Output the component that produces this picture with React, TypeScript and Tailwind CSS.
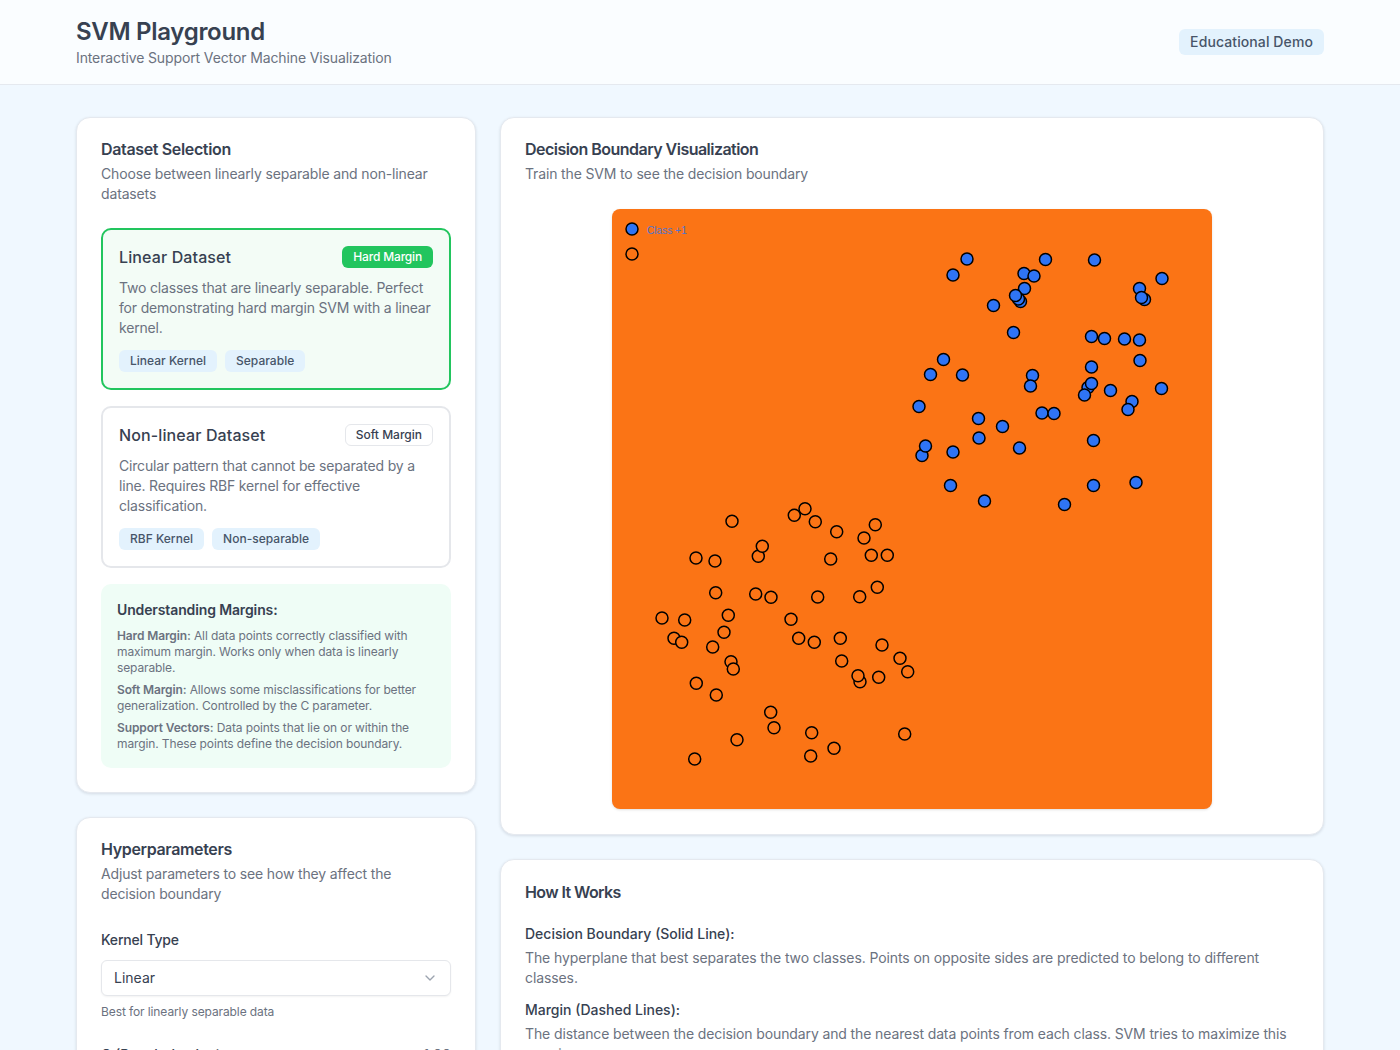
import type { ReactNode } from 'react';
import { ChevronDown } from 'lucide-react';

const blue: [number, number][] = [
  [967, 259], [953, 275], [1045.5, 259.5], [1094.5, 260], [1024, 273.5], [1034, 276], [1162, 278.5],
  [1139.5, 288.5], [1024.5, 288.5], [1144.5, 299.5], [1141.5, 297.5], [1020.5, 301.5], [1018.5, 299],
  [1015.5, 295.5], [993.5, 305.5], [1013.5, 332.5], [1091.5, 336.5], [1104.5, 338.5], [1124.5, 339],
  [1139.5, 340], [1140, 360.5], [943.5, 359.5], [930.5, 374.5], [962.5, 375], [1032.5, 375.5],
  [1030.5, 386], [1091.5, 367], [1088, 387.5], [1091.5, 383.5], [1084.5, 395], [1110.5, 390.5],
  [1161.5, 388.5], [1132, 401.5], [1128, 409.5], [919, 406.5], [1042, 413], [1054, 413.5], [978.5, 418.5],
  [1002.5, 426.5], [979, 438], [1019.5, 448], [922, 455.5], [925.5, 446], [953, 452], [1093.5, 440.5],
  [950.5, 485.5], [984.5, 501], [1064.5, 504.5], [1093.5, 485.5], [1136, 482.5],
];

const orange: [number, number][] = [
  [732, 521.3], [794.3, 515.3], [805, 508.7], [815.3, 521.7], [836.7, 531.7], [875.3, 524.7], [864, 538],
  [758.3, 556.3], [762.3, 546.3], [696, 558], [715, 561], [830.7, 559], [871.3, 555.3], [887.3, 555.3],
  [715.7, 592.7], [755.7, 594], [771, 597.3], [817.7, 597], [859.7, 596.7], [877.3, 587.3], [662, 618],
  [684.7, 620], [728.3, 615.3], [724, 632.3], [791, 619.3], [798.7, 638.3], [814.3, 642.3], [840.3, 638.3],
  [882, 645], [674, 638.3], [681.7, 642.3], [712.7, 647], [731, 661.7], [733.3, 669], [841.7, 661],
  [900, 658.3], [907.7, 671.7], [860, 681.7], [858, 675.7], [878.7, 677.3], [696.3, 683.3], [716.3, 695],
  [770.7, 712.3], [774, 727.7], [811.7, 732.7], [737, 739.7], [904.7, 734], [834, 748.3], [810.7, 756],
  [694.7, 759],
];

function Plot() {
  return (
    <svg width="600" height="600" viewBox="0 0 600 600" className="block rounded-lg bg-[#fb7415] shadow-sm">
      <circle cx="20" cy="20" r="6" fill="#2f74f5" stroke="#000" strokeWidth="1.5" />
      <text x="35" y="25" fontSize="10.2" fontFamily="Liberation Sans, sans-serif" fill="#4f74d0">Class +1</text>
      <circle cx="20" cy="45" r="6" fill="#fb7415" stroke="#000" strokeWidth="1.5" />
      {blue.map(([x, y], i) => (
        <circle key={i} cx={x - 612} cy={y - 209} r="6" fill="#2f74f5" stroke="#000" strokeWidth="1.5" />
      ))}
      {orange.map(([x, y], i) => (
        <circle key={i} cx={x - 612} cy={y - 209} r="6" fill="#fb7415" stroke="#000" strokeWidth="1.5" />
      ))}
    </svg>
  );
}

function Tag({ children }: { children: string }) {
  return <span className="flex h-[22px] items-center rounded-md bg-[#e3f2fd] px-[11px] text-xs font-medium tracking-[0.02px] text-[#475569]">{children}</span>;
}

function Card({ children }: { children: ReactNode }) {
  return <div className="rounded-[14px] border border-[#e5e9ef] bg-white p-6 shadow-[0_1px_3px_rgba(15,23,42,0.12)]">{children}</div>;
}

function CardHead({ title, desc, tight }: { title: string; desc: ReactNode; tight?: boolean }) {
  return (
    <div>
      <h2 className={tight ? 'text-base font-semibold leading-[14px] tracking-[-0.53px] text-[#374151]' : 'text-base font-semibold leading-[14px] tracking-[-0.35px] text-[#374151]'}>{title}</h2>
      <p className="mt-2 text-sm leading-5 tracking-[-0.15px] text-[#6b7280]">{desc}</p>
    </div>
  );
}

function DatasetCard(props: { title: string; badge: string; desc: string; tags: string[]; active?: boolean }) {
  return (
    <div className={props.active ? 'rounded-[10px] border-2 border-[#22c55e] bg-[#f3fcf6] p-4' : 'rounded-[10px] border-2 border-[#e5e7eb] bg-white p-4'}>
      <div className="flex h-[22px] items-center justify-between">
        <h3 className="text-base font-medium tracking-[0.12px] text-[#374151]">{props.title}</h3>
        {props.active ? (
          <span className="flex h-[22px] items-center rounded-md bg-[#22c55e] px-[11px] text-xs font-medium tracking-[-0.18px] text-white">{props.badge}</span>
        ) : (
          <span className="flex h-[22px] items-center rounded-md border border-[#e5e7eb] bg-white px-[10px] text-xs font-medium text-[#374151]">{props.badge}</span>
        )}
      </div>
      <p className="mt-[10px] text-sm leading-5 tracking-[-0.18px] text-[#6b7280]">{props.desc}</p>
      <div className="mt-[12px] flex gap-2">
        {props.tags.map((t) => <Tag key={t}>{t}</Tag>)}
      </div>
    </div>
  );
}

export default function App() {
  return (
    <div className="h-screen overflow-hidden bg-[#f0f8ff] font-['Inter',sans-serif]">
      <header className="border-b border-[#e5e9ef] bg-[#fafdff]">
        <div className="mx-auto flex max-w-7xl items-center justify-between px-4 py-4">
          <div>
            <h1 className="text-2xl font-semibold tracking-[-0.3px] text-[#374151]">SVM Playground</h1>
            <p className="text-sm tracking-[-0.12px] text-[#6b7280]">Interactive Support Vector Machine Visualization</p>
          </div>
          <span className="flex h-[26px] items-center rounded-md bg-[#e3f2fd] px-[11px] text-sm font-medium tracking-[0.1px] text-[#475569]">Educational Demo</span>
        </div>
      </header>

      <main className="mx-auto grid max-w-7xl grid-cols-3 gap-6 px-4 py-8">
        <div className="flex flex-col gap-6">
          <Card>
            <CardHead title="Dataset Selection" desc="Choose between linearly separable and non-linear datasets" />
            <div className="mt-6 flex flex-col gap-4">
              <DatasetCard active title="Linear Dataset" badge="Hard Margin" desc="Two classes that are linearly separable. Perfect for demonstrating hard margin SVM with a linear kernel." tags={['Linear Kernel', 'Separable']} />
              <DatasetCard title="Non-linear Dataset" badge="Soft Margin" desc="Circular pattern that cannot be separated by a line. Requires RBF kernel for effective classification." tags={['RBF Kernel', 'Non-separable']} />
              <div className="rounded-[10px] bg-[#effdf6] p-4">
                <h4 className="text-sm font-semibold leading-5 tracking-[-0.13px] text-[#374151]">Understanding Margins:</h4>
                <div className="mt-2 flex flex-col gap-[6px] text-xs leading-4 tracking-[-0.12px] text-[#6b7280]">
                  <p><strong className="font-semibold">Hard Margin:</strong> All data points correctly classified with maximum margin. Works only when data is linearly separable.</p>
                  <p><strong className="font-semibold">Soft Margin:</strong> Allows some misclassifications for better generalization. Controlled by the C parameter.</p>
                  <p><strong className="font-semibold">Support Vectors:</strong> Data points that lie on or within the margin. These points define the decision boundary.</p>
                </div>
              </div>
            </div>
          </Card>

          <Card>
            <CardHead title="Hyperparameters" desc={<>Adjust parameters to see how they affect the<br />decision boundary</>} />
            <div className="mt-[26px]">
              <label className="block text-sm font-medium leading-5 tracking-[-0.2px] text-[#374151]">Kernel Type</label>
              <div className="mt-[10px] flex h-9 items-center justify-between rounded-md border border-[#e5e7eb] bg-white px-3 text-sm text-[#374151] shadow-xs">
                Linear
                <ChevronDown className="h-4 w-4 text-[#9ca3af]" />
              </div>
              <p className="mt-2 text-xs leading-4 tracking-[-0.1px] text-[#6b7280]">Best for linearly separable data</p>
              <div className="mt-[25px] flex justify-between text-sm font-medium leading-5 text-[#374151]">
                <span>C (Regularization)</span>
                <span className="text-[#6b7280]">1.00</span>
              </div>
            </div>
          </Card>
        </div>

        <div className="col-span-2 flex flex-col gap-6">
          <Card>
            <CardHead tight title="Decision Boundary Visualization" desc="Train the SVM to see the decision boundary" />
            <div className="mt-[25px] flex justify-center pb-[1px]">
              <Plot />
            </div>
          </Card>

          <Card>
            <h2 className="text-base font-semibold leading-4 tracking-[-0.6px] text-[#374151]">How It Works</h2>
            <div className="mt-6 flex flex-col gap-3">
              <div>
                <h4 className="text-sm font-medium leading-5 text-[#374151]">Decision Boundary (Solid Line):</h4>
                <p className="mt-1 text-sm leading-5 tracking-[-0.1px] text-[#6b7280]">The hyperplane that best separates the two classes. Points on opposite sides are predicted to belong to different classes.</p>
              </div>
              <div>
                <h4 className="text-sm font-medium leading-5 text-[#374151]">Margin (Dashed Lines):</h4>
                <p className="mt-1 text-sm leading-5 tracking-[-0.12px] text-[#6b7280]">The distance between the decision boundary and the nearest data points from each class. SVM tries to maximize this margin.</p>
              </div>
            </div>
          </Card>
        </div>
      </main>
    </div>
  );
}
